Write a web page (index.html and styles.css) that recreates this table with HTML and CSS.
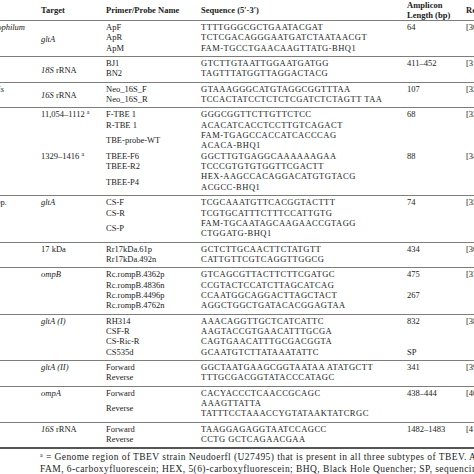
FILE: index.html
```html
<!DOCTYPE html>
<html>
<head>
<meta charset="utf-8">
<link rel="stylesheet" href="styles.css">
</head>
<body>
<div class="page">
<table class="t">
<colgroup>
<col class="c0"><col class="c1"><col class="c2"><col class="c3"><col class="c4"><col class="c5">
</colgroup>
<thead>
<tr><th></th><th>Target</th><th>Primer/Probe Name</th><th>Sequence (5′-3′)</th><th>Amplicon<br>Length (bp)</th><th>Reference</th></tr>
</thead>
<tbody class="grp">
<tr><td rowspan="3" class="sp g-a"><i>Anaplasma phagocytophilum</i></td><td rowspan="3" class="mid"><i>gltA</i></td><td class="nm">ApF</td><td class="sq">TTTTGGGCGCTGAATACGAT</td><td rowspan="3">64</td><td rowspan="3" class="ref">[30]</td></tr>
<tr><td class="nm">ApR</td><td class="sq">TCTCGACAGGGAATGATCTAATAACGT</td></tr>
<tr><td class="nm">ApM</td><td class="sq">FAM-TGCCTGAACAAGTTATG-BHQ1</td></tr>
</tbody>
<tbody class="grp">
<tr><td rowspan="2" class="sp g-hide"><i>Babesia</i> spp.</td><td rowspan="2" class="mid"><i>18S</i> rRNA</td><td class="nm">BJ1</td><td class="sq">GTCTTGTAATTGGAATGATGG</td><td rowspan="2">411–452</td><td rowspan="2" class="ref">[31]</td></tr>
<tr><td class="nm">BN2</td><td class="sq">TAGTTTATGGTTAGGACTACG</td></tr>
</tbody>
<tbody class="grp">
<tr><td rowspan="2" class="sp g-c"><i>Neoehrlichia mikurensis</i></td><td rowspan="2" class="mid"><i>16S</i> rRNA</td><td class="nm">Neo_16S_F</td><td class="sq">GTAAAGGGCATGTAGGCGGTTTAA</td><td rowspan="2">107</td><td rowspan="2" class="ref">[32]</td></tr>
<tr><td class="nm">Neo_16S_R</td><td class="sq">TCCACTATCCTCTCTCGATCTCTAGTT TAA</td></tr>
</tbody>
<tbody class="grp">
<tr><td rowspan="6" class="sp g-hide">TBEV</td><td rowspan="3">11,054–1112 <sup>a</sup></td><td class="nm">F-TBE 1</td><td class="sq">GGGCGGTTCTTGTTCTCC</td><td rowspan="3">68</td><td rowspan="3" class="ref">[33]</td></tr>
<tr><td class="nm">R-TBE 1</td><td class="sq">ACACATCACCTCCTTGTCAGACT</td></tr>
<tr><td class="nm">TBE-probe-WT</td><td class="sq">FAM-TGAGCCACCATCACCCAG<br>ACACA-BHQ1</td></tr>
<tr><td rowspan="3">1329–1416 <sup>a</sup></td><td class="nm">TBEE-F6</td><td class="sq">GGCTTGTGAGGCAAAAAAGAA</td><td rowspan="3">88</td><td rowspan="3" class="ref">[34]</td></tr>
<tr><td class="nm">TBEE-R2</td><td class="sq">TCCCGTGTGTGGTTCGACTT</td></tr>
<tr><td class="nm">TBEE-P4</td><td class="sq">HEX-AAGCCACAGGACATGTGTACG<br>ACGCC-BHQ1</td></tr>
</tbody>
<tbody class="grp">
<tr><td rowspan="3" class="sp g-e"><i>Rickettsia</i> spp.</td><td rowspan="3"><i>gltA</i></td><td class="nm">CS-F</td><td class="sq">TCGCAAATGTTCACGGTACTTT</td><td rowspan="3">74</td><td rowspan="3" class="ref">[35]</td></tr>
<tr><td class="nm">CS-R</td><td class="sq">TCGTGCATTTCTTTCCATTGTG</td></tr>
<tr><td class="nm">CS-P</td><td class="sq">FAM-TGCAATAGCAAGAACCGTAGG<br>CTGGATG-BHQ1</td></tr>
</tbody>
<tbody class="grp">
<tr><td rowspan="2" class="sp"></td><td rowspan="2">17 kDa</td><td class="nm">Rr17kDa.61p</td><td class="sq">GCTCTTGCAACTTCTATGTT</td><td rowspan="2">434</td><td rowspan="2" class="ref">[36]</td></tr>
<tr><td class="nm">Rr17kDa.492n</td><td class="sq">CATTGTTCGTCAGGTTGGCG</td></tr>
</tbody>
<tbody class="grp">
<tr><td rowspan="4" class="sp"></td><td rowspan="4"><i>ompB</i></td><td class="nm">Rc.rompB.4362p</td><td class="sq">GTCAGCGTTACTTCTTCGATGC</td><td rowspan="2">475</td><td rowspan="4" class="ref">[37]</td></tr>
<tr><td class="nm">Rc.rompB.4836n</td><td class="sq">CCGTACTCCATCTTAGCATCAG</td></tr>
<tr><td class="nm">Rc.rompB.4496p</td><td class="sq">CCAATGGCAGGACTTAGCTACT</td><td rowspan="2">267</td></tr>
<tr><td class="nm">Rc.rompB.4762n</td><td class="sq">AGGCTGGCTGATACACGGAGTAA</td></tr>
</tbody>
<tbody class="grp">
<tr><td rowspan="4" class="sp"></td><td rowspan="4"><i>gltA (I)</i></td><td class="nm">RH314</td><td class="sq">AAACAGGTTGCTCATCATTC</td><td rowspan="3">832</td><td rowspan="4" class="ref">[38]</td></tr>
<tr><td class="nm">CSF-R</td><td class="sq">AAGTACCGTGAACATTTGCGA</td></tr>
<tr><td class="nm">CS-Ric-R</td><td class="sq">CAGTGAACATTTGCGACGGTA</td></tr>
<tr><td class="nm">CS535d</td><td class="sq">GCAATGTCTTATAAATATTC</td><td>SP</td></tr>
</tbody>
<tbody class="grp">
<tr><td rowspan="2" class="sp"></td><td rowspan="2"><i>gltA (II)</i></td><td class="nm">Forward</td><td class="sq">GGCTAATGAAGCGGTAATAA ATATGCTT</td><td rowspan="2">341</td><td rowspan="2" class="ref">[39]</td></tr>
<tr><td class="nm">Reverse</td><td class="sq">TTTGCGACGGTATACCCATAGC</td></tr>
</tbody>
<tbody class="grp">
<tr><td rowspan="2" class="sp"></td><td rowspan="2"><i>ompA</i></td><td class="nm">Forward</td><td class="sq">CACYACCCTCAACCGCAGC</td><td rowspan="2">438–444</td><td rowspan="2" class="ref">[40]</td></tr>
<tr><td class="nm">Reverse</td><td class="sq">AAAGTTATTA<br>TATTTCCTAAACCYGTATAAKTATCRGC</td></tr>
</tbody>
<tbody class="grp last">
<tr><td rowspan="2" class="sp"></td><td rowspan="2"><i>16S</i> rRNA</td><td class="nm">Forward</td><td class="sq">TAAGGAGAGGTAATCCAGCC</td><td rowspan="2">1482–1483</td><td rowspan="2" class="ref">[41]</td></tr>
<tr><td class="nm">Reverse</td><td class="sq">CCTG GCTCAGAACGAA</td></tr>
</tbody>
</table>
<div class="notes">
<p><sup>a</sup> = Genome region of TBEV strain Neudoerfl (U27495) that is present in all three subtypes of TBEV. Abbreviations:</p>
<p>FAM, 6-carboxyfluorescein; HEX, 5(6)-carboxyfluorescein; BHQ, Black Hole Quencher; SP, sequencing primer.</p>
</div>
</div>
</body>
</html>
```
FILE: styles.css
```css
html, body {
  margin: 0;
  padding: 0;
  background: #fff;
}
body {
  width: 474px;
  height: 474px;
  overflow: hidden;
  font-family: "Liberation Serif", "Times New Roman", serif;
  font-size: 8.5px;
  line-height: 10.35px;
  color: #222;
}
.page {
  width: 474px;
  overflow: hidden;
}
.t {
  border-collapse: collapse;
  table-layout: fixed;
  width: 685px;
  margin-left: -160px;
}
.c0 { width: 200px; }
.c1 { width: 65px; }
.c2 { width: 95px; }
.c3 { width: 206px; }
.c4 { width: 59px; }
.c5 { width: 60px; }
th {
  font-weight: bold;
  text-align: left;
  vertical-align: middle;
  padding: 0 0 0 1px;
  line-height: 10px;
  white-space: nowrap;
  border-bottom: 1px solid #7d7d7d;
}
td {
  padding: 0 0 0 1px;
  vertical-align: top;
  white-space: nowrap;
  overflow: hidden;
}
td.sq { letter-spacing: 0.5px; }
td.nm { vertical-align: middle; }
td.mid { vertical-align: middle; }
.grp { border-bottom: 1px solid #7d7d7d; }
.grp.last { border-bottom: 2px solid #555; }
.grp tr:first-child td { padding-top: 1px; }
.grp tr:last-child td { padding-bottom: 3px; }
.sp { text-align: right; }
.g-a { padding-right: 15px; }
.g-c { padding-right: 36px; }
.g-e { padding-right: 33px; }
.g-hide { padding-right: 60px; }
sup {
  font-size: 6px;
  line-height: 0;
  vertical-align: 3px;
}
.notes {
  padding: 2px 0 0 40px;
  white-space: nowrap;
  font-size: 9.5px;
  letter-spacing: 0.43px;
}
.notes p {
  margin: 0;
  line-height: 12px;
}
```
